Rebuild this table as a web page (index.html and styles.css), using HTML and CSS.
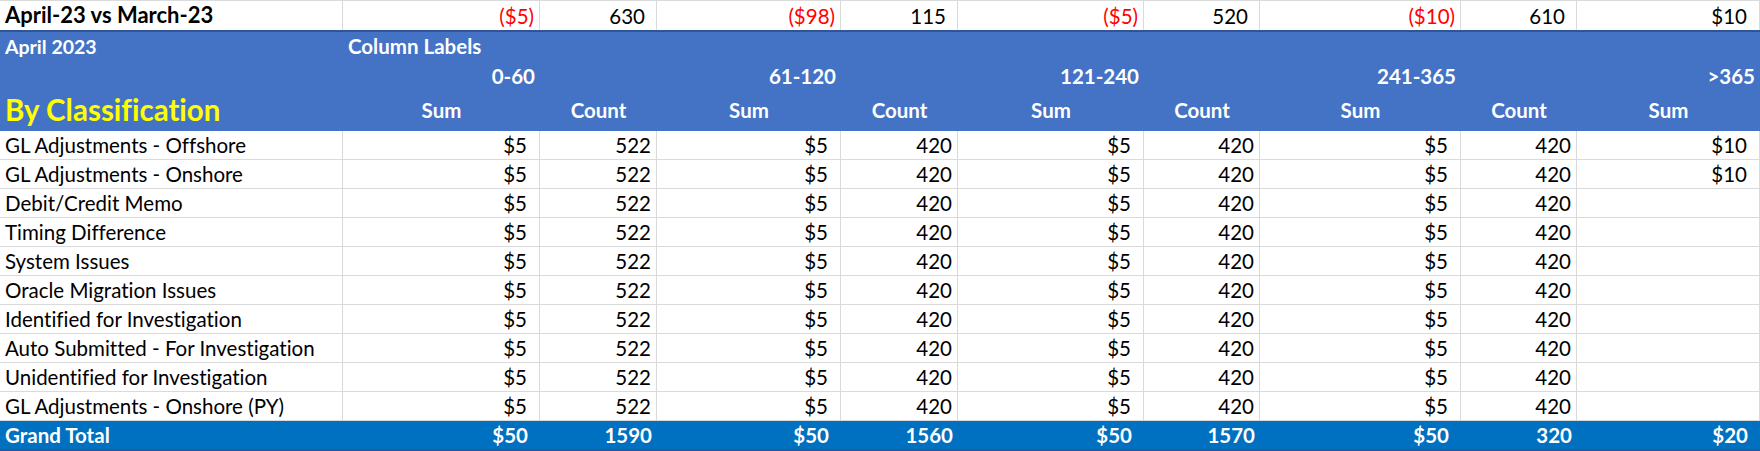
FILE: index.html
```html
<!DOCTYPE html>
<html>
<head>
<meta charset="utf-8">
<link rel="stylesheet" href="styles.css">
</head>
<body>
<div class="sheet">
  <div class="row top">
    <div class="c lbl b">April-23 vs March-23</div>
    <div class="c num neg">($5)</div>
    <div class="c num cnt2">630</div>
    <div class="c num neg">($98)</div>
    <div class="c num cnt2">115</div>
    <div class="c num neg">($5)</div>
    <div class="c num cnt2">520</div>
    <div class="c num neg">($10)</div>
    <div class="c num cnt2">610</div>
    <div class="c num pos">$10</div>
  </div>

  <div class="head">
    <div class="row h1">
      <div class="c lbl">April 2023</div>
      <div class="c lbl span9">Column Labels</div>
    </div>
    <div class="row h2">
      <div class="c"></div>
      <div class="c num">0-60</div>
      <div class="c"></div>
      <div class="c num">61-120</div>
      <div class="c"></div>
      <div class="c num">121-240</div>
      <div class="c"></div>
      <div class="c num">241-365</div>
      <div class="c"></div>
      <div class="c num">&gt;365</div>
    </div>
    <div class="row h3">
      <div class="c lbl big">By Classification</div>
      <div class="c ctr">Sum</div>
      <div class="c ctr">Count</div>
      <div class="c ctr">Sum</div>
      <div class="c ctr">Count</div>
      <div class="c ctr">Sum</div>
      <div class="c ctr">Count</div>
      <div class="c ctr">Sum</div>
      <div class="c ctr">Count</div>
      <div class="c ctr">Sum</div>
    </div>
  </div>

  <div class="row data">
    <div class="c lbl">GL Adjustments - Offshore</div>
    <div class="c num pos">$5</div><div class="c num">522</div>
    <div class="c num pos">$5</div><div class="c num">420</div>
    <div class="c num pos">$5</div><div class="c num">420</div>
    <div class="c num pos">$5</div><div class="c num">420</div>
    <div class="c num pos">$10</div>
  </div>
  <div class="row data">
    <div class="c lbl">GL Adjustments - Onshore</div>
    <div class="c num pos">$5</div><div class="c num">522</div>
    <div class="c num pos">$5</div><div class="c num">420</div>
    <div class="c num pos">$5</div><div class="c num">420</div>
    <div class="c num pos">$5</div><div class="c num">420</div>
    <div class="c num pos">$10</div>
  </div>
  <div class="row data">
    <div class="c lbl">Debit/Credit Memo</div>
    <div class="c num pos">$5</div><div class="c num">522</div>
    <div class="c num pos">$5</div><div class="c num">420</div>
    <div class="c num pos">$5</div><div class="c num">420</div>
    <div class="c num pos">$5</div><div class="c num">420</div>
    <div class="c num pos"></div>
  </div>
  <div class="row data">
    <div class="c lbl">Timing Difference</div>
    <div class="c num pos">$5</div><div class="c num">522</div>
    <div class="c num pos">$5</div><div class="c num">420</div>
    <div class="c num pos">$5</div><div class="c num">420</div>
    <div class="c num pos">$5</div><div class="c num">420</div>
    <div class="c num pos"></div>
  </div>
  <div class="row data">
    <div class="c lbl">System Issues</div>
    <div class="c num pos">$5</div><div class="c num">522</div>
    <div class="c num pos">$5</div><div class="c num">420</div>
    <div class="c num pos">$5</div><div class="c num">420</div>
    <div class="c num pos">$5</div><div class="c num">420</div>
    <div class="c num pos"></div>
  </div>
  <div class="row data">
    <div class="c lbl">Oracle Migration Issues</div>
    <div class="c num pos">$5</div><div class="c num">522</div>
    <div class="c num pos">$5</div><div class="c num">420</div>
    <div class="c num pos">$5</div><div class="c num">420</div>
    <div class="c num pos">$5</div><div class="c num">420</div>
    <div class="c num pos"></div>
  </div>
  <div class="row data">
    <div class="c lbl">Identified for Investigation</div>
    <div class="c num pos">$5</div><div class="c num">522</div>
    <div class="c num pos">$5</div><div class="c num">420</div>
    <div class="c num pos">$5</div><div class="c num">420</div>
    <div class="c num pos">$5</div><div class="c num">420</div>
    <div class="c num pos"></div>
  </div>
  <div class="row data">
    <div class="c lbl">Auto Submitted - For Investigation</div>
    <div class="c num pos">$5</div><div class="c num">522</div>
    <div class="c num pos">$5</div><div class="c num">420</div>
    <div class="c num pos">$5</div><div class="c num">420</div>
    <div class="c num pos">$5</div><div class="c num">420</div>
    <div class="c num pos"></div>
  </div>
  <div class="row data">
    <div class="c lbl">Unidentified for Investigation</div>
    <div class="c num pos">$5</div><div class="c num">522</div>
    <div class="c num pos">$5</div><div class="c num">420</div>
    <div class="c num pos">$5</div><div class="c num">420</div>
    <div class="c num pos">$5</div><div class="c num">420</div>
    <div class="c num pos"></div>
  </div>
  <div class="row data">
    <div class="c lbl">GL Adjustments - Onshore (PY)</div>
    <div class="c num pos">$5</div><div class="c num">522</div>
    <div class="c num pos">$5</div><div class="c num">420</div>
    <div class="c num pos">$5</div><div class="c num">420</div>
    <div class="c num pos">$5</div><div class="c num">420</div>
    <div class="c num pos"></div>
  </div>

  <div class="row total">
    <div class="c lbl">Grand Total</div>
    <div class="c num pos">$50</div><div class="c num">1590</div>
    <div class="c num pos">$50</div><div class="c num">1560</div>
    <div class="c num pos">$50</div><div class="c num">1570</div>
    <div class="c num pos">$50</div><div class="c num">320</div>
    <div class="c num pos">$20</div>
  </div>
</div>
</body>
</html>
```

FILE: styles.css
```css
* { box-sizing: border-box; }
html, body { margin: 0; padding: 0; background: #ffffff; }
body {
  font-family: Lato, "Open Sans", sans-serif;
  font-size: 20.5px;
  color: #000000;
  font-variant-ligatures: none;
  font-feature-settings: "liga" 0, "clig" 0;
}

.sheet { width: 1760px; overflow: hidden; }

.row {
  display: grid;
  grid-template-columns: 343px 197px 117px 184px 117px 186px 116px 201px 116px 183px;
}

.c {
  display: flex;
  align-items: flex-end;
  padding: 0 5px 4px 5px;
  line-height: 1;
  white-space: nowrap;
  overflow: hidden;
}
.lbl { justify-content: flex-start; padding-left: 5px; }
.num { justify-content: flex-end; }
.ctr { justify-content: center; }
.pos { padding-right: 12px; }
.neg { color: #ff0000; padding-right: 5px; }
.cnt2 { padding-right: 11px; }
.b { font-weight: 700; }

/* top comparison row */
.top { height: 30px; border-top: 1px solid #dadada; }
.top .c { border-right: 1px solid #dadada; padding-bottom: 4px; }
.top .lbl { font-size: 22px; }

/* pivot header */
.head {
  background: #4472c4;
  color: #ffffff;
  font-weight: 700;
  border-top: 2px solid #2f5597;
  height: 101px;
}
.h1 { height: 27px; }
.h2 { height: 29px; }
.h3 { height: 43px; }
.span9 { grid-column: 2 / span 9; }
.h1 .c { padding-bottom: 3px; }
.h1 .lbl:first-child { font-size: 19.5px; }
.h2 .c { padding-bottom: 2px; }
.h3 .c { padding-bottom: 11px; }
.h3 .big { color: #ffff00; font-size: 29.5px; padding-bottom: 7px; }

/* body rows */
.data { height: 29px; }
.data .c { border-right: 1px solid #dadada; border-bottom: 1px solid #dadada; }

/* grand total */
.total {
  height: 30px;
  background: #0070c0;
  color: #ffffff;
  font-weight: 700;
  border-bottom: 2px solid #2f5597;
}
.total .c { padding-bottom: 4px; }
```
